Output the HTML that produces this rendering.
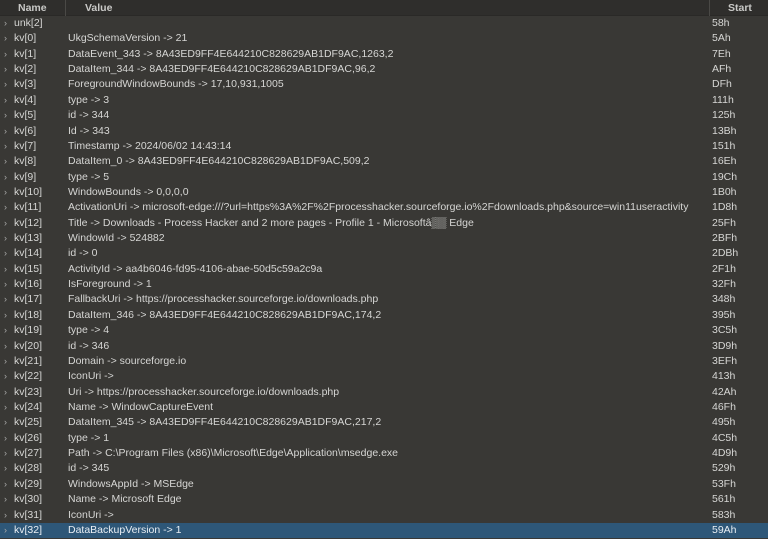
<!DOCTYPE html>
<html><head><meta charset="utf-8"><style>
*{margin:0;padding:0;box-sizing:border-box}
body{width:768px;height:539px;background:#393835;font-family:"Liberation Sans",sans-serif;font-size:10.5px;color:#d6d6d4;overflow:hidden;position:relative}
.hd{height:16px;background:#2f2e2c;position:relative;color:#c9c9c7;font-weight:bold;border-bottom:1px solid #2a2927}
.hd span{position:absolute;top:2px}
.sep{position:absolute;top:0;width:1px;height:16px;background:#4a4946}
.r{height:15.36px;line-height:15.36px;position:relative;white-space:nowrap}
.r span{position:absolute}
.a{left:4px;color:#aaa;font-size:9px}
.n{left:14px}
.v{left:68px}
.s{left:712px}
.sel{background:#2e5778;color:#e8eef4}
</style></head><body>
<div class="hd"><span style="left:18px">Name</span><span style="left:85px">Value</span><span style="left:728px">Start</span><div class="sep" style="left:65px"></div><div class="sep" style="left:709px"></div></div>
<div class="r"><span class="a">›</span><span class="n">unk[2]</span><span class="s">58h</span></div>
<div class="r"><span class="a">›</span><span class="n">kv[0]</span><span class="v">UkgSchemaVersion -&gt; 21</span><span class="s">5Ah</span></div>
<div class="r"><span class="a">›</span><span class="n">kv[1]</span><span class="v">DataEvent_343 -&gt; 8A43ED9FF4E644210C828629AB1DF9AC,1263,2</span><span class="s">7Eh</span></div>
<div class="r"><span class="a">›</span><span class="n">kv[2]</span><span class="v">DataItem_344 -&gt; 8A43ED9FF4E644210C828629AB1DF9AC,96,2</span><span class="s">AFh</span></div>
<div class="r"><span class="a">›</span><span class="n">kv[3]</span><span class="v">ForegroundWindowBounds -&gt; 17,10,931,1005</span><span class="s">DFh</span></div>
<div class="r"><span class="a">›</span><span class="n">kv[4]</span><span class="v">type -&gt; 3</span><span class="s">111h</span></div>
<div class="r"><span class="a">›</span><span class="n">kv[5]</span><span class="v">id -&gt; 344</span><span class="s">125h</span></div>
<div class="r"><span class="a">›</span><span class="n">kv[6]</span><span class="v">Id -&gt; 343</span><span class="s">13Bh</span></div>
<div class="r"><span class="a">›</span><span class="n">kv[7]</span><span class="v">Timestamp -&gt; 2024/06/02 14:43:14</span><span class="s">151h</span></div>
<div class="r"><span class="a">›</span><span class="n">kv[8]</span><span class="v">DataItem_0 -&gt; 8A43ED9FF4E644210C828629AB1DF9AC,509,2</span><span class="s">16Eh</span></div>
<div class="r"><span class="a">›</span><span class="n">kv[9]</span><span class="v">type -&gt; 5</span><span class="s">19Ch</span></div>
<div class="r"><span class="a">›</span><span class="n">kv[10]</span><span class="v">WindowBounds -&gt; 0,0,0,0</span><span class="s">1B0h</span></div>
<div class="r"><span class="a">›</span><span class="n">kv[11]</span><span class="v">ActivationUri -&gt; microsoft-edge:///?url=https%3A%2F%2Fprocesshacker.sourceforge.io%2Fdownloads.php&amp;source=win11useractivity</span><span class="s">1D8h</span></div>
<div class="r"><span class="a">›</span><span class="n">kv[12]</span><span class="v">Title -&gt; Downloads - Process Hacker and 2 more pages - Profile 1 - Microsoftâ▒▒ Edge</span><span class="s">25Fh</span></div>
<div class="r"><span class="a">›</span><span class="n">kv[13]</span><span class="v">WindowId -&gt; 524882</span><span class="s">2BFh</span></div>
<div class="r"><span class="a">›</span><span class="n">kv[14]</span><span class="v">id -&gt; 0</span><span class="s">2DBh</span></div>
<div class="r"><span class="a">›</span><span class="n">kv[15]</span><span class="v">ActivityId -&gt; aa4b6046-fd95-4106-abae-50d5c59a2c9a</span><span class="s">2F1h</span></div>
<div class="r"><span class="a">›</span><span class="n">kv[16]</span><span class="v">IsForeground -&gt; 1</span><span class="s">32Fh</span></div>
<div class="r"><span class="a">›</span><span class="n">kv[17]</span><span class="v">FallbackUri -&gt; https://processhacker.sourceforge.io/downloads.php</span><span class="s">348h</span></div>
<div class="r"><span class="a">›</span><span class="n">kv[18]</span><span class="v">DataItem_346 -&gt; 8A43ED9FF4E644210C828629AB1DF9AC,174,2</span><span class="s">395h</span></div>
<div class="r"><span class="a">›</span><span class="n">kv[19]</span><span class="v">type -&gt; 4</span><span class="s">3C5h</span></div>
<div class="r"><span class="a">›</span><span class="n">kv[20]</span><span class="v">id -&gt; 346</span><span class="s">3D9h</span></div>
<div class="r"><span class="a">›</span><span class="n">kv[21]</span><span class="v">Domain -&gt; sourceforge.io</span><span class="s">3EFh</span></div>
<div class="r"><span class="a">›</span><span class="n">kv[22]</span><span class="v">IconUri -&gt;</span><span class="s">413h</span></div>
<div class="r"><span class="a">›</span><span class="n">kv[23]</span><span class="v">Uri -&gt; https://processhacker.sourceforge.io/downloads.php</span><span class="s">42Ah</span></div>
<div class="r"><span class="a">›</span><span class="n">kv[24]</span><span class="v">Name -&gt; WindowCaptureEvent</span><span class="s">46Fh</span></div>
<div class="r"><span class="a">›</span><span class="n">kv[25]</span><span class="v">DataItem_345 -&gt; 8A43ED9FF4E644210C828629AB1DF9AC,217,2</span><span class="s">495h</span></div>
<div class="r"><span class="a">›</span><span class="n">kv[26]</span><span class="v">type -&gt; 1</span><span class="s">4C5h</span></div>
<div class="r"><span class="a">›</span><span class="n">kv[27]</span><span class="v">Path -&gt; C:\Program Files (x86)\Microsoft\Edge\Application\msedge.exe</span><span class="s">4D9h</span></div>
<div class="r"><span class="a">›</span><span class="n">kv[28]</span><span class="v">id -&gt; 345</span><span class="s">529h</span></div>
<div class="r"><span class="a">›</span><span class="n">kv[29]</span><span class="v">WindowsAppId -&gt; MSEdge</span><span class="s">53Fh</span></div>
<div class="r"><span class="a">›</span><span class="n">kv[30]</span><span class="v">Name -&gt; Microsoft Edge</span><span class="s">561h</span></div>
<div class="r"><span class="a">›</span><span class="n">kv[31]</span><span class="v">IconUri -&gt;</span><span class="s">583h</span></div>
<div class="r sel"><span class="a">›</span><span class="n">kv[32]</span><span class="v">DataBackupVersion -&gt; 1</span><span class="s">59Ah</span></div>
</body></html>
